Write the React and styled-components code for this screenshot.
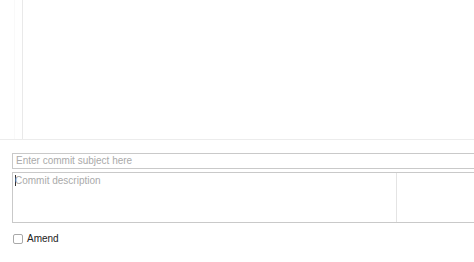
import React from "react"
import styled, { createGlobalStyle } from "styled-components"

const GlobalStyle = createGlobalStyle`
  html, body {
    margin: 0;
    padding: 0;
    background: #fff;
  }
  body {
    font-family: "Liberation Sans", Arial, sans-serif;
    overflow: hidden;
  }
`

const Page = styled.div`
  width: 474px;
  height: 262px;
  display: flex;
  flex-direction: column;
  overflow: hidden;
`

const Top = styled.div`
  height: 139px;
  display: flex;
  border-bottom: 1px solid #ececec;
  flex-shrink: 0;
`

const Gutter = styled.div`
  width: 23px;
  border-right: 1px solid #e9e9e9;
  box-sizing: border-box;
  display: flex;
  justify-content: flex-end;
`

const GutterShade = styled.div`
  width: 7px;
  border-left: 1px solid #f9f9f9;
`

const Form = styled.div`
  padding: 13px 0 0 12px;
  display: flex;
  flex-direction: column;
`

const Subject = styled.div`
  width: 466px;
  height: 16px;
  box-sizing: border-box;
  border: 1px solid #c9c9c9;
  font-size: 10px;
  color: #aaa;
  padding: 0 3px;
  line-height: 14px;
`

const Description = styled.div`
  margin-top: 3px;
  width: 466px;
  height: 51px;
  box-sizing: border-box;
  border: 1px solid #c9c9c9;
  display: flex;
`

const DescText = styled.div`
  width: 384px;
  box-sizing: border-box;
  border-right: 1px solid #e4e4e4;
  font-size: 10px;
  color: #aaa;
  padding: 2px 2px;
  line-height: 12px;
`

const Caret = styled.span`
  display: inline-block;
  width: 1px;
  height: 11px;
  background: #333;
  vertical-align: -2px;
  margin-right: -1px;
`

const AmendRow = styled.label`
  margin-top: 10px;
  display: flex;
  align-items: center;
  gap: 4px;
  font-size: 10px;
  color: #222;
`

const Box = styled.span`
  width: 10px;
  height: 10px;
  box-sizing: border-box;
  border: 1px solid #a9a9a9;
  border-radius: 2px;
  margin-left: 1px;
  background: #fff;
`

export default function App() {
  return (
    <Page>
      <GlobalStyle />
      <Top>
        <Gutter>
          <GutterShade />
        </Gutter>
      </Top>
      <Form>
        <Subject>Enter commit subject here</Subject>
        <Description>
          <DescText>
            <Caret />
            Commit description
          </DescText>
        </Description>
        <AmendRow>
          <Box />
          Amend
        </AmendRow>
      </Form>
    </Page>
  )
}
